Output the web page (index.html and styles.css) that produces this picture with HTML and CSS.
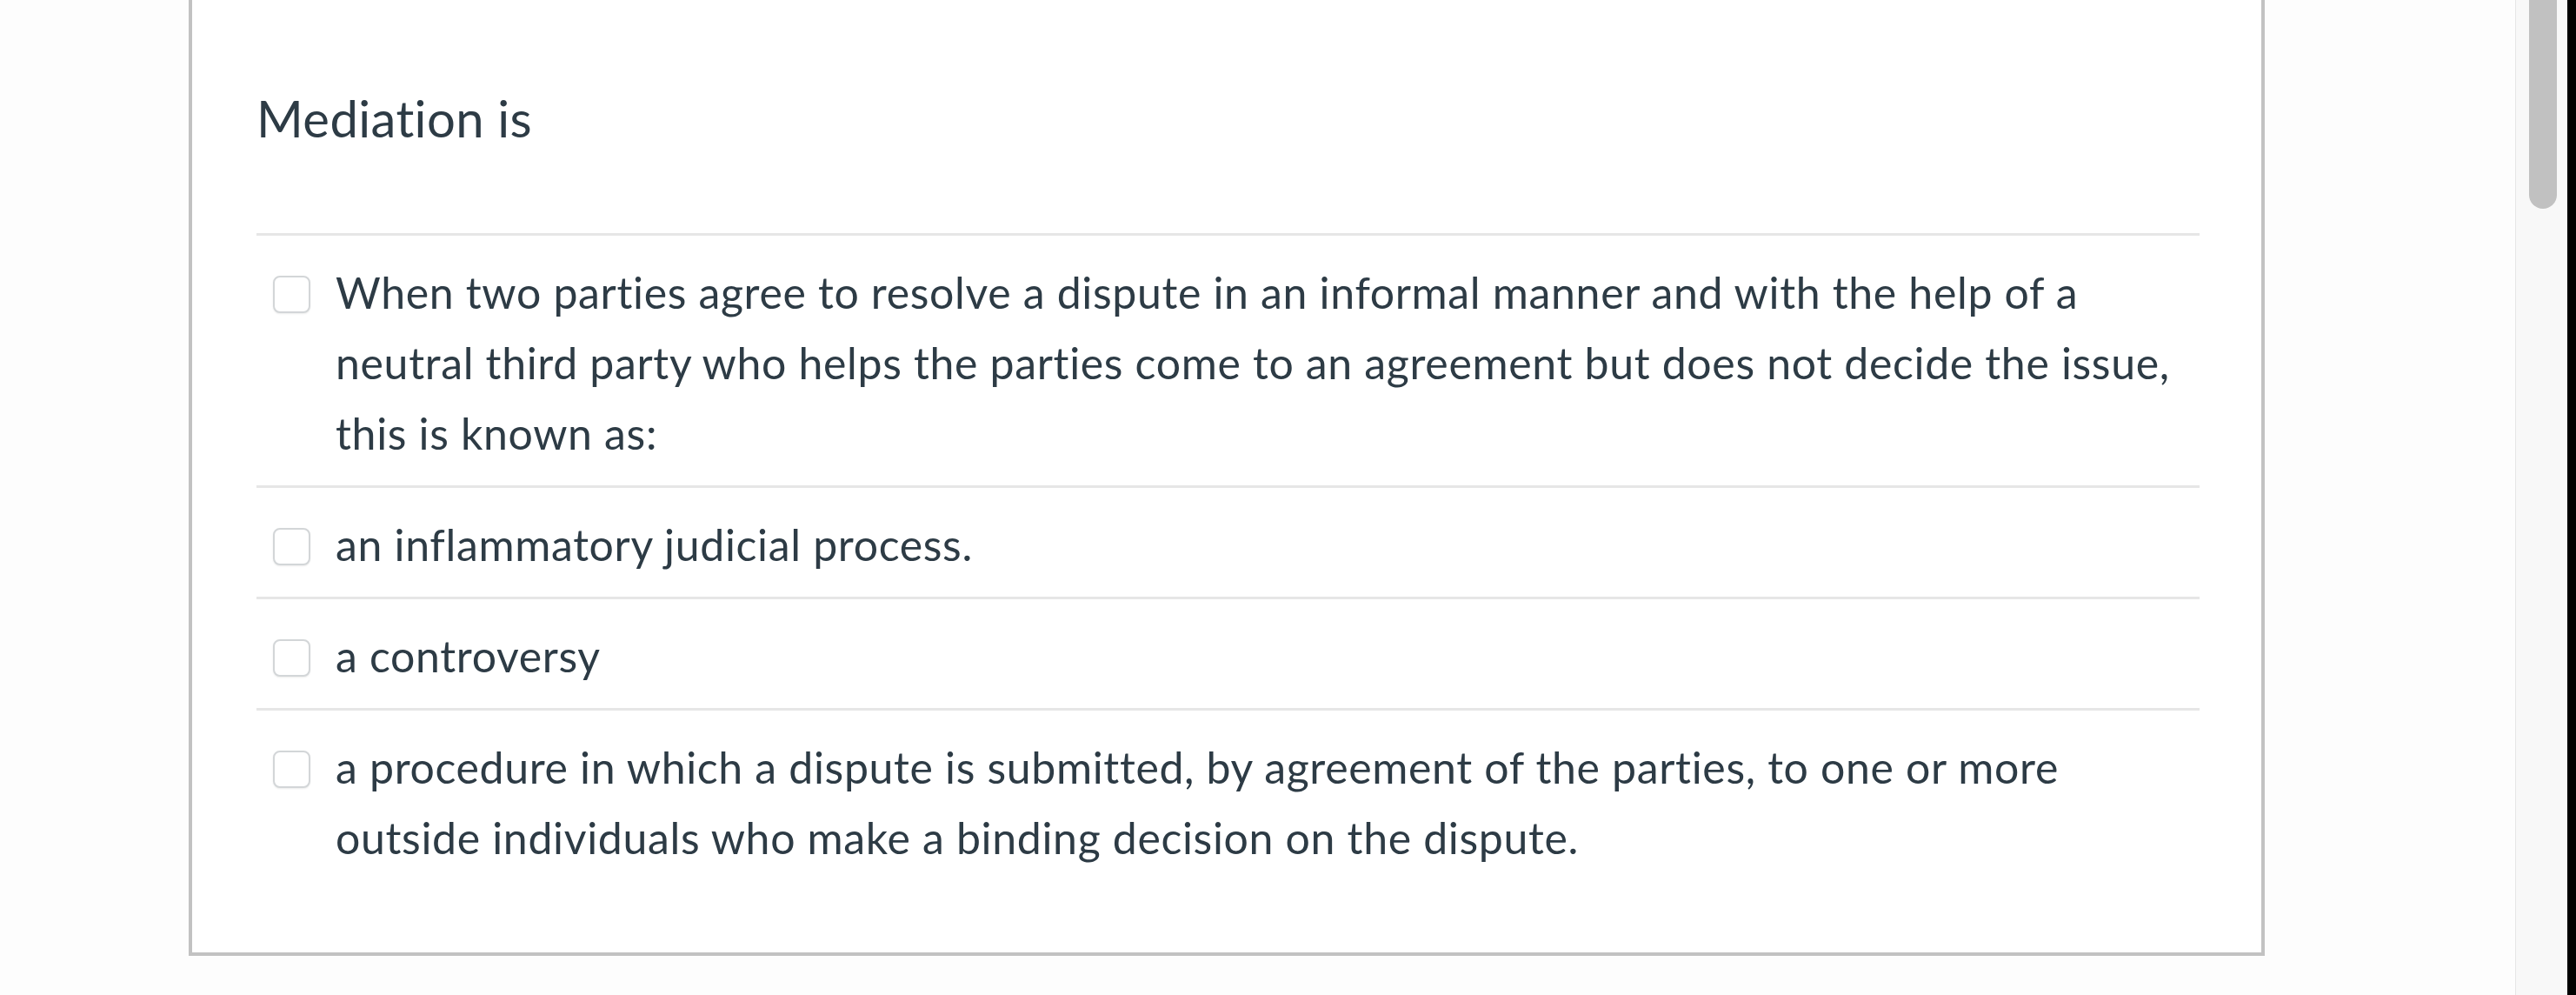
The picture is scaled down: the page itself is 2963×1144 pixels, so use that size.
FILE: index.html
```html
<!DOCTYPE html>
<html>
  <head>
    <meta charset="utf-8">
    <title>Quiz question</title>
    <link rel="stylesheet" href="styles.css">
  </head>
  <body>
    <div class="page">
      <div class="content">
        <div class="question">
          <div class="question-text">Mediation is</div>
          <div class="answers">
            <label class="answer">
              <span class="check"></span>
              <span class="answer-text">When two parties agree to resolve a dispute in an informal manner and with the help of a neutral third party who helps the parties come to an agreement but does not decide the issue, this is known as:</span>
            </label>
            <label class="answer">
              <span class="check"></span>
              <span class="answer-text">an inflammatory judicial process.</span>
            </label>
            <label class="answer">
              <span class="check"></span>
              <span class="answer-text">a controversy</span>
            </label>
            <label class="answer">
              <span class="check"></span>
              <span class="answer-text">a procedure in which a dispute is submitted, by agreement of the parties, to one or more outside individuals who make a binding decision on the dispute.</span>
            </label>
          </div>
        </div>
      </div>
      <div class="scrollbar">
        <div class="thumb"></div>
      </div>
      <div class="edge"></div>
    </div>
  </body>
</html>
```

FILE: styles.css
```css
body, html {
  margin: 0;
  height: 100%;
}

body {
  overflow: hidden;
  background-color: #fdfdfd;
  color: #2d3b45;
  font-family: Lato, "Open Sans", sans-serif;
}

.page {
  display: flex;
  height: 100%;
}

.content {
  flex-grow: 1;
}

.question {
  margin: -40px 288px 0 217px;
  padding: 129px 71px 72px 74px;
  background-color: #fff;
  border: 4px solid #c2c2c2;
}

.question-text {
  font-size: 58px;
  letter-spacing: 0.4px;
  line-height: 85px;
  padding-bottom: 90px;
}

.answer {
  display: flex;
  align-items: flex-start;
  border-top: 3px solid #e6e6e6;
  padding: 25px 0 19px;
}

.check {
  flex-shrink: 0;
  width: 39px;
  height: 39px;
  margin: 21px 29px 0 19px;
  border: 2px solid #d3d6d8;
  border-radius: 8px;
  box-shadow: 0 1px 2px rgba(0, 0, 0, 0.08);
  background-color: #fff;
}

.answer-text {
  font-size: 50px;
  letter-spacing: 0.65px;
  line-height: 81px;
}

.scrollbar {
  width: 59px;
  flex-shrink: 0;
  background-color: #f8f8f8;
  border-left: 1px solid #e6e6e6;
}

.thumb {
  width: 32px;
  height: 240px;
  margin-left: 15px;
  background-color: #c1c1c1;
  border-radius: 0 0 16px 16px;
}

.edge {
  width: 10px;
  flex-shrink: 0;
  background-color: #000;
}
```
